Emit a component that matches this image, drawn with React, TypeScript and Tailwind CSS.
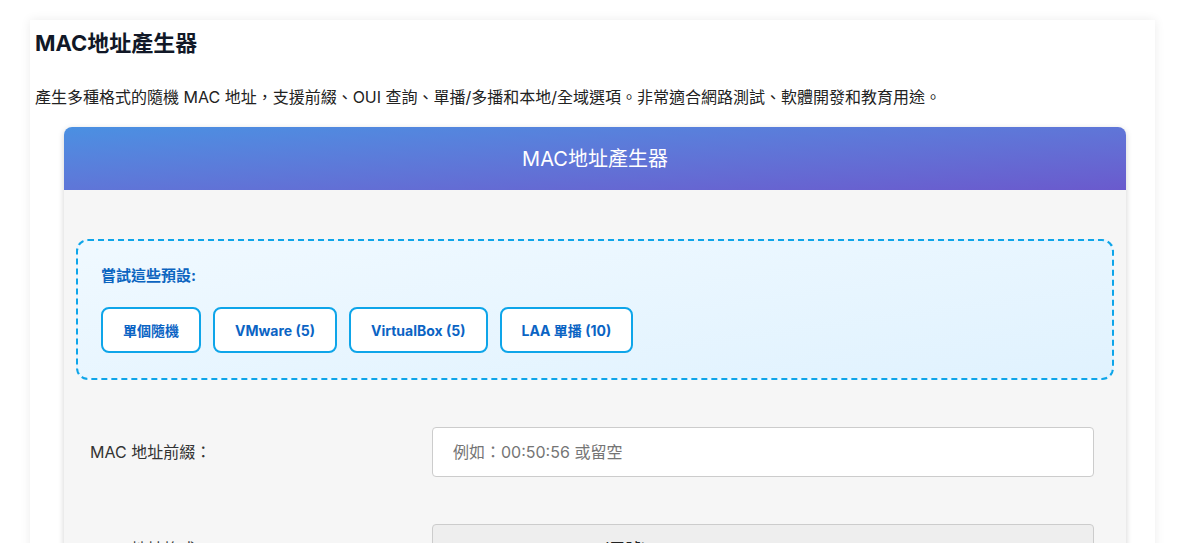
const presets = ['單個隨機', 'VMware (5)', 'VirtualBox (5)', 'LAA 單播 (10)'];

export default function App() {
  return (
    <div
      lang="zh-TW"
      className="min-h-[6300px] bg-white pt-[20px] pr-[45px] pl-[30px] text-[#222]"
      style={{ fontFamily: 'Inter, "Noto Sans CJK TC", sans-serif' }}
    >
      <div className="min-h-[6260px] bg-white px-[5px] pt-[8px] shadow-[0_0_10px_rgba(0,0,0,0.08)]">
        <h1 className="text-[22px] leading-[30px] font-bold text-[#111827]">
          MAC地址產生器
        </h1>
        <p className="mt-[27px] text-[16px] leading-[24px]">
          產生多種格式的隨機 MAC 地址，支援前綴、OUI 查詢、單播/多播和本地/全域選項。非常適合網路測試、軟體開發和教育用途。
        </p>

        <div className="mt-[18px] mr-[24px] ml-[29px] overflow-hidden rounded-lg shadow-[0_2px_6px_rgba(0,0,0,0.18)]">
          <div className="flex h-[63px] items-center justify-center bg-gradient-to-br from-[#4a90e2] to-[#6a5acd] text-[20px] text-white">
            MAC地址產生器
          </div>

          <div className="bg-[#f6f6f6] px-[12px] pt-[49px] pb-10">
            <div className="rounded-xl border-2 border-dashed border-[#0ea5e9] bg-gradient-to-br from-[#f0f9ff] to-[#e0f2fe] px-[23px] pt-[25px] pb-[25px]">
              <div className="text-[15px] leading-[20px] font-bold text-[#0b64c0]">
                嘗試這些預設:
              </div>
              <div className="mt-[21px] flex gap-[12px]">
                {presets.map((p) => (
                  <button
                    key={p}
                    className="h-[46px] rounded-lg border-2 border-[#0ea5e9] bg-white px-5 text-[14px] font-bold text-[#0b64c4]"
                  >
                    {p}
                  </button>
                ))}
              </div>
            </div>

            <div className="mt-[47px] flex items-center pr-[20px] pl-[14px]">
              <label className="w-[342px] shrink-0 text-[16px] text-[#333]">
                MAC 地址前綴：
              </label>
              <input
                className="h-[50px] flex-1 rounded border border-[#ccc] bg-white px-[20px] text-[16px] placeholder:text-[#757575]"
                placeholder="例如：00:50:56 或留空"
              />
            </div>

            <div className="mt-[47px] flex items-center pr-[20px] pl-[14px]">
              <label className="w-[342px] shrink-0 text-[16px] text-[#333]">
                MAC 地址格式：
              </label>
              <div className="flex h-[50px] flex-1 items-center rounded border border-[#ccc] bg-[#eee] px-[22px] text-[16px] text-[#222]">
                00:1A:2B:3C:4D:5E (冒號)
              </div>
            </div>

            <div className="mt-[47px] flex items-center pr-[20px] pl-[14px]">
              <label className="w-[342px] shrink-0 text-[16px] text-[#333]">
                產生數量：
              </label>
              <input
                className="h-[50px] flex-1 rounded border border-[#ccc] bg-white px-[20px] text-[16px]"
                defaultValue="1"
              />
            </div>
          </div>
        </div>
      </div>
    </div>
  );
}
